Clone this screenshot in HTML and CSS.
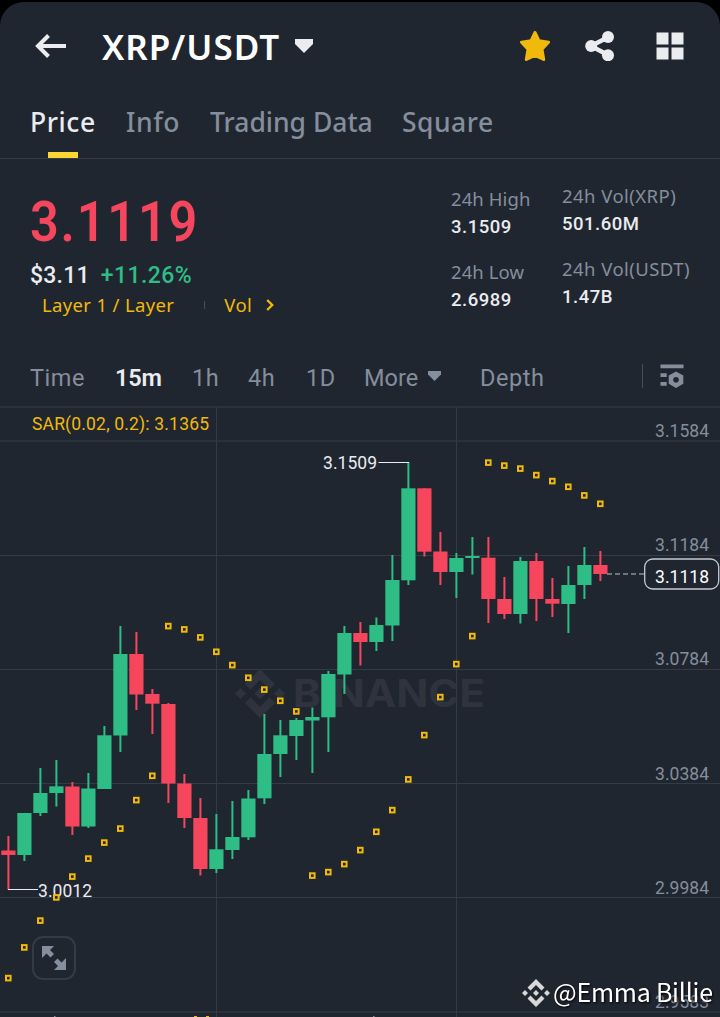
FILE: index.html
```
<!DOCTYPE html>
<html lang="en">

<head>
    <meta charset="UTF-8">
    <meta name="viewport" content="width=device-width, initial-scale=1.0">
    <title>XRP/USDT</title>
    <link rel="stylesheet" href="styles.css">
</head>

<body>
    <div class="app">
        <header class="topbar">
            <svg class="back" width="32" height="26" viewBox="0 0 32 26">
                <path d="M31 13H4M13.500 2.500L3 13l10.500 10.500" fill="none" stroke="#eaecef" stroke-width="4" />
            </svg>
            <h1>XRP/USDT</h1>
            <svg class="caret" width="18" height="14" viewBox="0 0 18 14">
                <path d="M0 0h18v5L9 14 0 5z" fill="#eaecef" />
            </svg>
            <div class="actions">
                <svg width="30" height="30" viewBox="0 0 30 30">
                    <path d="M15 1.500l4 8.300 9.500 1.400-6.500 7 1.700 10.300L15 24.300l-8.700 4.200L8 18.200l-6.500-7L11 9.800z" fill="#f0b90b" stroke="#f0b90b" stroke-width="3" stroke-linejoin="round" />
                </svg>
                <svg width="30" height="30" viewBox="0 0 30 30">
                    <path d="M23.500 6L6 15l17.500 9.200" fill="none" stroke="#eaecef" stroke-width="4.500" />
                    <g fill="#eaecef">
                        <circle cx="6.200" cy="15" r="6" />
                        <circle cx="23" cy="6" r="6" />
                        <circle cx="23" cy="24.200" r="6" />
                    </g>
                </svg>
                <svg width="28" height="28" viewBox="0 0 28 28">
                    <path d="M.500.500h12v12H.500zM15.500.500h12v12h-12zM.500 15.500h12v12H.500zM15.500 15.500h12v12h-12z" fill="#eaecef" />
                </svg>
            </div>
        </header>

        <nav class="tabs">
            <a class="tab active t-price">Price</a>
            <a class="tab t-info">Info</a>
            <a class="tab t-data">Trading Data</a>
            <a class="tab t-square">Square</a>
        </nav>

        <section class="ticker">
            <div class="quote">
                <div class="last">3.1119</div>
                <div class="change"><span class="usd">$3.11</span><span class="up">+11.26%</span></div>
                <div class="tags">
                    <span>Layer 1 / Layer</span>
                    <i class="sep"></i>
                    <span>Vol</span>
                    <svg width="8" height="12" viewBox="0 0 8 12">
                        <path d="M1.200 1l5 5-5 5" fill="none" stroke="#f0b90b" stroke-width="2.400" />
                    </svg>
                </div>
            </div>
            <dl class="stats">
                <dt>24h High</dt>
                <dd>3.1509</dd>
                <dt>24h Low</dt>
                <dd>2.6989</dd>
            </dl>
            <dl class="stats volume">
                <dt>24h Vol(XRP)</dt>
                <dd>501.60M</dd>
                <dt>24h Vol(USDT)</dt>
                <dd>1.47B</dd>
            </dl>
        </section>

        <nav class="intervals">
            <span class="i-time">Time</span>
            <span class="i-15m active">15m</span>
            <span class="i-1h">1h</span>
            <span class="i-4h">4h</span>
            <span class="i-1d">1D</span>
            <span class="i-more">More</span>
            <svg class="more-caret" width="13" height="10" viewBox="0 0 13 10">
                <path d="M0 0h13v3.500L6.500 10 0 3.500z" fill="#848e9c" />
            </svg>
            <span class="i-depth">Depth</span>
            <i class="divider"></i>
            <svg class="settings" width="24" height="24" viewBox="0 0 24 24" fill="#848e9c">
                <path d="M.500.500h23v3.700H.500zM.500 9.300h6.200v3.700H.500zM.500 18h6.200v3.800H.500z" />
                <path fill-rule="evenodd" d="M16 7.500l7.300 4v8.300L16 24l-7.300-4.200v-8.300zM16 13a2.800 2.800 0 1 0 0 5.600 2.800 2.800 0 0 0 0-5.600z" />
            </svg>
        </nav>

        <svg id="chart" class="chart" width="720" height="611" viewBox="0 406 720 611">
            <g class="grid">
                <path class="strong" d="M0 407h720M0 441h720M0 1012h720" />
                <path d="M0 555.500h720M0 669.500h720M0 783.500h720M0 897.500h720M216.500 407v610M456.500 407v610" />
            </g>
            <g class="brand">
                <path d="M260 669l15 15-5.500 5.500-9.500-9.500-9.500 9.500-5.500-5.500zM260 718l15-15-5.500-5.500-9.500 9.500-9.500-9.500-5.500 5.500zM240.500 688l5.500 5.500-5.500 5.500-5.500-5.500zM260 688l5.500 5.500-5.500 5.500-5.500-5.500zM279.500 688l5.500 5.500-5.500 5.500-5.500-5.500z" />
                <text x="293" y="707" textLength="192" lengthAdjust="spacingAndGlyphs">BINANCE</text>
            </g>
            <g class="axis">
                <text x="655" y="437" textLength="54">3.1584</text>
                <text x="655" y="551" textLength="54">3.1184</text>
                <text x="655" y="665" textLength="54">3.0784</text>
                <text x="655" y="780" textLength="54">3.0384</text>
                <text x="655" y="894" textLength="54">2.9984</text>
                <text x="655" y="1008" textLength="54">2.9583</text>
            </g>
            <text class="sar-label" x="32" y="430" textLength="177">SAR(0.02, 0.2): 3.1365</text>
            <g id="candles"></g>
            <g class="extreme">
                <path d="M378.500 462.500H409M8 889.500h30" />
                <text x="323" y="469" textLength="54">3.1509</text>
                <text x="38" y="897" textLength="54">3.0012</text>
            </g>
            <g id="sar"></g>
            <g class="current">
                <path d="M607 574h37" />
                <rect x="644.700" y="559" width="74" height="30" rx="8" />
                <text x="655" y="583" textLength="54">3.1118</text>
            </g>
            <g class="expand">
                <rect x="33" y="937" width="42" height="42" rx="10" />
                <path d="M42 946h12l-4 4 4 4-3.500 3.500-4-4-4.500 4.500zM66 970H54l4-4-4-4 3.500-3.500 4 4 4.500-4.500z" />
            </g>
            <path class="clip" d="M54 1016.500h1.500M373 1016.500h1.500" />
            <path class="clip yellow" d="M194 1016.500h3M206 1016.500h3" />
            <g class="credit">
                <path d="M536 979l8.500 8.500-3 3-5.500-5.500-5.500 5.500-3-3zM536 1007l8.500-8.500-3-3-5.500 5.500-5.500-5.500-3 3zM525 990l3 3-3 3-3-3zM536 990l3 3-3 3-3-3zM547 990l3 3-3 3-3-3z" />
                <text x="553" y="1002" textLength="160">@Emma Billie</text>
            </g>
        </svg>
    </div>

    <script src="chart.js"></script>
</body>

</html>
```
FILE: styles.css
```
body {
    margin: 0;
    background: #000;
    font-family: Roboto, sans-serif;
    color: #eaecef;
}

.app {
    width: 720px;
    height: 1015px;
    margin-top: 2px;
    background: #202630;
    border-radius: 24px 24px 0 0;
    overflow: hidden;
}

.topbar {
    display: flex;
    align-items: center;
    height: 88px;
    padding: 0 36px 0 35px;
}

h1 {
    margin: 1px 0 0 35px;
    width: 178px;
    font: 600 35px "Noto Sans", sans-serif;
    letter-spacing: 1px;
    white-space: nowrap;
    color: #fff;
}

.caret {
    margin-left: 15px;
    margin-top: -1px;
}

.actions {
    display: flex;
    align-items: center;
    margin-left: auto;
}

.actions svg:nth-child(2) {
    margin: 0 41px 0 35px;
}

.tabs {
    display: flex;
    height: 68px;
    padding-left: 30px;
    border-bottom: 1px solid #333b47;
    font: 500 26.500px/64px "Noto Sans", sans-serif;
    color: #848e9c;
}

.tab {
    position: relative;
    white-space: nowrap;
}

.tab.active {
    color: #eaecef;
}

.tab.active::after {
    content: '';
    position: absolute;
    left: 18px;
    bottom: 0;
    width: 30px;
    height: 6px;
    background: #fcd535;
}

.t-price { width: 96px; letter-spacing: 0.600px; }
.t-info { width: 84px; letter-spacing: 0.600px; }
.t-data { width: 192px; }
.t-square { letter-spacing: 0.500px; }

.ticker {
    display: flex;
    height: 187px;
}

.quote {
    width: 421px;
    padding-left: 30px;
}

/* tall narrow digits */
.last {
    margin-top: 30px;
    font: 600 56px/66px Roboto, sans-serif;
    letter-spacing: 2px;
    transform: scaleX(0.9);
    transform-origin: left;
    color: #f6465d;
}

.change {
    display: flex;
    gap: 11px;
    margin-top: 7px;
    font: 500 23px/28px Roboto, sans-serif;
}

.usd {
    letter-spacing: 0.200px;
}

.up {
    letter-spacing: 0.450px;
    color: #2ebd85;
}

.tags {
    display: flex;
    align-items: center;
    margin: 2px 0 0 12px;
    font: 18.500px/26px "Noto Sans", sans-serif;
    letter-spacing: 0.350px;
    color: #f0b90b;
}

.tags .sep {
    width: 1px;
    height: 8px;
    margin: 0 19px 0 30px;
    background: #474d57;
}

.tags svg {
    margin-left: 14px;
}

.stats {
    width: 111px;
    margin: 0;
    padding-top: 26px;
    white-space: nowrap;
}

.stats.volume {
    padding-top: 23px;
}

.stats dt {
    font: 18.500px/28px "Noto Sans", sans-serif;
    letter-spacing: 0.100px;
    color: #848e9c;
}

.stats dd {
    margin: 0 0 16px;
    font: 500 18.500px/29px Roboto, sans-serif;
    letter-spacing: 0.500px;
}

.stats.volume dt {
    letter-spacing: 0.450px;
}

.intervals {
    display: flex;
    align-items: center;
    height: 60px;
    padding-left: 30px;
    font-size: 23.500px;
    letter-spacing: 0.550px;
    color: #848e9c;
}

.intervals span {
    padding-top: 3px;
}

.intervals .active {
    font-weight: 600;
    letter-spacing: -0.200px;
    color: #eaecef;
}

.i-time { width: 85px; }
.i-15m { width: 77px; }
.i-1h { width: 56px; }
.i-4h { width: 58px; }
.i-1d { width: 58px; }

.i-more {
    width: 64px;
    letter-spacing: 0;
}

.i-depth {
    width: 162px;
    margin-left: 39px;
}

.divider {
    width: 1px;
    height: 24px;
    margin-right: 17px;
    background: #474d57;
}

.chart {
    display: block;
    font-family: Roboto, sans-serif;
    font-size: 17.500px;
}

.grid path {
    fill: none;
    stroke: #333b47;
    stroke-width: 1;
}

.grid .strong {
    stroke: #2b313b;
    stroke-width: 2;
}

.brand {
    fill: #2f333e;
    font: 700 38px Inter, sans-serif;
}

.axis {
    fill: #848e9c;
}

.sar-label {
    fill: #f0b90b;
}

.up-candle {
    fill: #2ebd85;
}

.down-candle {
    fill: #f6465d;
}

.extreme {
    fill: #eaecef;
    stroke: none;
}

.extreme path {
    stroke: #eaecef;
}

.sar-dot {
    fill: #202630;
    stroke: #f0b90b;
    stroke-width: 2;
}

.current path {
    stroke: #848e9c;
    stroke-width: 1.500;
    stroke-dasharray: 5 3;
}

.current rect {
    fill: #202630;
    stroke: #c5c9cf;
    stroke-width: 1.300;
}

.current text {
    fill: #fff;
}

.expand rect {
    fill: #202630;
    stroke: #333b47;
    stroke-width: 2;
}

.expand path {
    fill: #848e9c;
}

.clip {
    stroke: #848e9c;
    stroke-width: 1;
}

.clip.yellow {
    stroke: #f0b90b;
}

.credit path {
    fill: #d8d8d8;
}

.credit text {
    font: 25px "Noto Sans CJK SC", sans-serif;
    fill: #fff;
    filter: drop-shadow(1px 1px 1px #000);
}
```
FILE: chart.js
```
// high, body top, body bottom, low, direction (1 = up)
const candles = [
    [836, 850.5, 855, 889.5, 0], [813, 813, 855, 861, 1], [768, 793, 813, 816, 1],
    [760, 786.3, 793, 806.5, 1], [782, 786.5, 826.5, 835, 0], [773, 788.5, 826.5, 828, 1],
    [726, 735.3, 789, 789, 1], [626, 654, 735.5, 752, 1], [632, 654, 694.5, 710, 0],
    [689, 694, 703.7, 734, 0], [703, 704, 783.5, 803, 0], [774, 783.5, 818, 828, 0],
    [798, 818, 869, 875.5, 0], [814, 849.3, 869, 873, 1], [801, 837, 850, 859, 1],
    [790, 798.5, 837.3, 840, 1], [714, 754, 798.3, 804, 1], [720, 735.3, 754, 777, 1],
    [718, 720, 736, 760, 1], [707.5, 717, 720.5, 773, 1], [671, 674, 717.3, 752, 1],
    [626, 633, 674.5, 694, 1], [622, 633, 642, 665.5, 0], [617.5, 625, 642, 651, 1],
    [555, 580, 625.5, 641, 1], [462, 488.3, 580.3, 585, 1], [488.3, 488.3, 551.7, 556.5, 0],
    [532, 551.5, 572, 585, 0], [553, 558, 572, 598, 1], [537, 556, 558, 574.5, 1],
    [537, 557.7, 599, 623, 0], [577, 599, 614, 619, 0], [557, 561, 614, 623.5, 1],
    [553, 561, 599, 621, 0], [578, 599, 603.7, 617, 0], [566, 585, 604, 633, 1],
    [547, 565, 585, 599, 1], [551, 565, 574, 581, 0]
];

const sar = [
    978, 947.3, 920.5, 897.3, 876.5, 858.5, 842.5, 828.5, 800, 775.7,
    626, 629.3, 637.3, 651.7, 665, 677.7, 689.5, 700.7, 711.3,
    875.5, 872, 864, 850, 831.7, 810, 779.3, 735, 697, 664, 636,
    462.5, 465.5, 468.5, 475, 481, 486.7, 495.3, 503.7
];

function addRect(parent, cls, x, y, w, h) {
    let rect = document.createElementNS('http://www.w3.org/2000/svg', 'rect');
    rect.setAttribute('class', cls);
    rect.setAttribute('x', x);
    rect.setAttribute('y', y);
    rect.setAttribute('width', w);
    rect.setAttribute('height', h);
    parent.appendChild(rect);
}

candles.forEach(([high, top, bottom, low, up], i) => {
    let cls = up ? 'up-candle' : 'down-candle';
    let x = 8.4 + i * 16;
    let group = document.getElementById('candles');
    addRect(group, cls, x - 1, high, 2, low - high);
    addRect(group, cls, x - 7.1, top, 14.2, bottom - top);
});

sar.forEach((y, i) => {
    addRect(document.getElementById('sar'), 'sar-dot', 6 + i * 16, y - 2.2, 4.6, 4.6);
});
```
